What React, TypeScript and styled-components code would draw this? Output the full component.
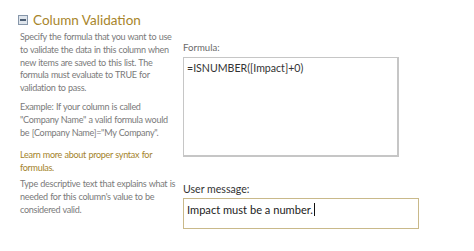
import styled, { createGlobalStyle } from "styled-components";

const GlobalStyle = createGlobalStyle`
  html, body {
    margin: 0;
    padding: 0;
    background: #ffffff;
  }
  body {
    font-family: Lato, "Open Sans", "Liberation Sans", sans-serif;
  }
`;

const Page = styled.div`
  width: 474px;
  height: 251px;
  padding: 13px 0 0 18px;
  box-sizing: border-box;
  overflow: hidden;
`;

const Header = styled.div`
  display: flex;
  align-items: center;
  gap: 5px;
  height: 14px;
`;

const Title = styled.h3`
  margin: 0;
  font-size: 13.5px;
  font-weight: 400;
  color: #a8852b;
  line-height: 14px;
`;

const Grid = styled.div`
  display: grid;
  grid-template-columns: 156px 236px;
  column-gap: 7px;
  padding-left: 2px;
  margin-top: 3px;
`;

const Description = styled.div<{ $top: number }>`
  padding-top: ${(p) => p.$top}px;
  font-size: 9.05px;
  letter-spacing: -0.3px;
  word-spacing: 0.4px;
  line-height: 12.8px;
  color: #7a7a7a;
  white-space: nowrap;
`;

const Para = styled.p<{ $gap?: number }>`
  margin: 0 0 ${(p) => p.$gap ?? 0}px 0;
`;

const Link = styled.a`
  color: #a4832b;
  text-decoration: none;
`;

const Field = styled.div<{ $top: number }>`
  padding-top: ${(p) => p.$top}px;
  display: flex;
  flex-direction: column;
`;

const Label = styled.label<{ $dark?: boolean }>`
  font-size: ${(p) => (p.$dark ? "10.6px" : "9.6px")};
  line-height: 14px;
  color: ${(p) => (p.$dark ? "#333333" : "#6a6a6a")};
  margin-bottom: 2px;
`;

const Box = styled.div<{ $height: number; $gold?: boolean; $width: number }>`
  width: ${(p) => p.$width}px;
  height: ${(p) => p.$height}px;
  box-sizing: border-box;
  border: 1px solid ${(p) => (p.$gold ? "#c9b98a" : "#c6c6c6")};
  border-right-width: ${(p) => (p.$gold ? "1px" : "2px")};
  border-bottom-width: ${(p) => (p.$gold ? "1px" : "2px")};
  padding: ${(p) => (p.$gold ? "4px 3px" : "3px 3px")};
  font-size: ${(p) => (p.$gold ? "11.1px" : "10.6px")};
  line-height: 14px;
  color: ${(p) => (p.$gold ? "#222222" : "#333333")};
`;

const Caret = styled.span`
  display: inline-block;
  width: 1px;
  height: 13px;
  background: #111;
  vertical-align: -2px;
  margin-left: 1px;
`;

function CollapseIcon() {
  return (
    <svg width="10" height="10" viewBox="0 0 10 10">
      <rect x="0.5" y="0.5" width="9" height="9" fill="#dfe5ec" stroke="#8797aa" />
      <rect x="2" y="4" width="6" height="2" fill="#4d5e73" />
    </svg>
  );
}

export default function App() {
  return (
    <>
      <GlobalStyle />
      <Page>
        <Header>
          <CollapseIcon />
          <Title>Column Validation</Title>
        </Header>
        <Grid>
          <Description $top={1}>
            <Para $gap={6}>
              Specify the formula that you want to use
              <br />
              to validate the data in this column when
              <br />
              new items are saved to this list. The
              <br />
              formula must evaluate to TRUE for
              <br />
              validation to pass.
            </Para>
            <Para $gap={10}>
              Example: If your column is called
              <br />
              "Company Name" a valid formula would
              <br />
              be [Company Name]="My Company".
            </Para>
            <Para>
              <Link href="#">
                Learn more about proper syntax for
                <br />
                formulas.
              </Link>
            </Para>
          </Description>
          <Field $top={11}>
            <Label>Formula:</Label>
            <Box $height={100} $width={216}>
              =ISNUMBER([Impact]+0)
            </Box>
          </Field>
          <Description $top={3}>
            <Para>
              Type descriptive text that explains what is
              <br />
              needed for this column's value to be
              <br />
              considered valid.
            </Para>
          </Description>
          <Field $top={7}>
            <Label $dark>User message:</Label>
            <Box $height={31} $width={236} $gold>
              Impact must be a number.
              <Caret />
            </Box>
          </Field>
        </Grid>
      </Page>
    </>
  );
}
